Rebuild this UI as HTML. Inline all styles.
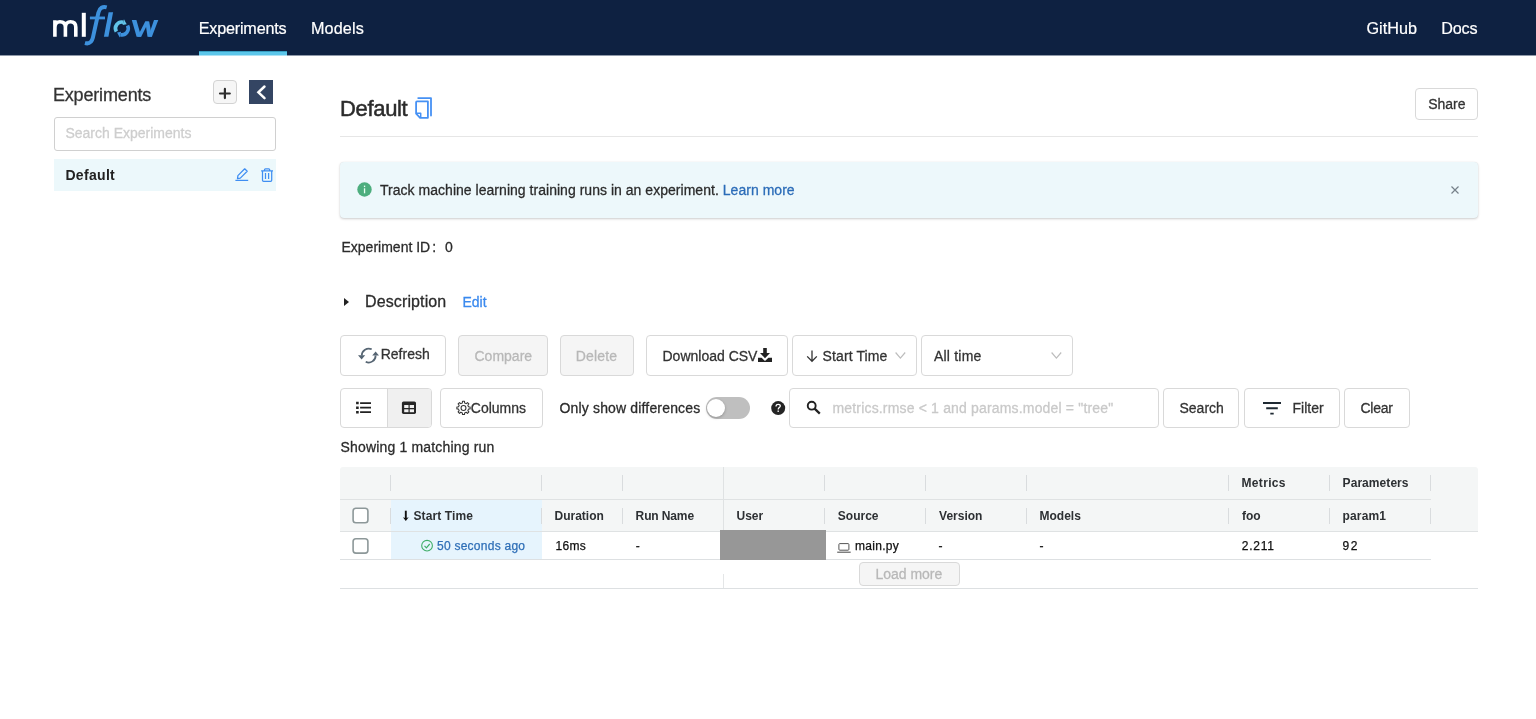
<!DOCTYPE html>
<html>
<head>
<meta charset="utf-8">
<title>MLflow</title>
<style>
*{box-sizing:border-box;margin:0;padding:0}
html,body{width:1536px;height:719px;overflow:hidden;background:#fff}
body{will-change:transform;font-family:"Liberation Sans",sans-serif;color:#333;font-size:14px;position:relative}
.abs{position:absolute;white-space:nowrap}
.t{position:absolute;white-space:nowrap;line-height:1;-webkit-text-stroke:.28px}
#hdr{position:absolute;left:0;top:0;width:1536px;height:55px;background:#0e2141}
#hdr .t{color:#fff;font-size:16.2px;-webkit-text-stroke:.2px}
.btn{position:absolute;border:1px solid #d9d9d9;border-radius:4px;background:#fff;color:#333;font-size:14px;white-space:nowrap}
.btn.dis{background:#f5f5f5;color:#b8b8b8}
.btn .t{font-size:14px}
.tick{position:absolute;width:1px;height:16px;background:#d9dcde}
.hc{position:absolute;white-space:nowrap;line-height:1;font-size:12px;font-weight:bold;color:#2d3033;letter-spacing:0px}
.dc{position:absolute;white-space:nowrap;line-height:1;font-size:12px;color:#111;letter-spacing:.3px;-webkit-text-stroke:.25px}
.cb{position:absolute;width:16px;height:16px;border:1.7px solid #8f9a9c;border-radius:3.5px;background:#fff}
</style>
</head>
<body>

<!-- ================= HEADER ================= -->
<div id="hdr">
  <svg class="abs" style="left:40px;top:0" width="130" height="55" viewBox="40 0 130 55">
    <defs><clipPath id="cw"><rect x="128" y="20" width="34" height="16.8"/></clipPath></defs>
    <!-- m -->
    <path d="M54.9 36.8V20.2 M54.9 27.4C54.9 23.4 57.4 21.8 59.9 21.8C63 21.8 65.4 23.4 65.4 27.2V36.8 M65.4 27.4C65.4 23.4 67.9 21.8 70.4 21.8C73.4 21.8 75.8 23.4 75.8 27.2V36.8" fill="none" stroke="#fff" stroke-width="3.6"/>
    <!-- l -->
    <rect x="81.8" y="12.8" width="4" height="24" fill="#fff"/>
    <!-- f -->
    <path d="M84.9 43.1C89.2 44.1 91.8 42.2 92.9 37.6L98.4 12.6C99.5 7.8 102.8 6.2 106.7 7.3" fill="none" stroke="#3d91dd" stroke-width="4"/>
    <path d="M89.9 17.95H105" fill="none" stroke="#3d91dd" stroke-width="2.8"/>
    <!-- l italic -->
    <path d="M108.6 12.2H113.1L108.4 36.8H103.9Z" fill="#3d91dd"/>
    <!-- o -->
    <path d="M127.55 25.49A6.4 6.4 0 0 1 120.41 34.64" fill="none" stroke="#3d91dd" stroke-width="3.6"/>
    <path d="M121.09 31.71L119.74 37.56L117.02 32.60Z" fill="#3d91dd"/>
    <path d="M116.31 31.60A6.4 6.4 0 0 1 123.29 22.16" fill="none" stroke="#62c5ea" stroke-width="3.6"/>
    <path d="M122.61 25.09L123.96 19.24L126.68 24.20Z" fill="#62c5ea"/>
    <!-- w -->
    <path d="M131.8 20H136.4L141.2 36.8H136.6Z" fill="#3d91dd"/><path d="M137.4 36.8H141.2L148.8 21.4H145.2Z" fill="#3d91dd"/><path d="M145.3 21.4H149.2L151.9 36.8H147.5Z" fill="#3d91dd"/><path d="M148.3 36.8H151.9L158.3 20H154Z" fill="#3d91dd"/>
  </svg>
  <div class="t" id="h_exp" style="left:198.7px;top:19.7px;letter-spacing:-0.2px">Experiments</div>
  <div class="abs" style="left:199px;top:51px;width:88px;height:1px;background:#379fc3"></div><div class="abs" style="left:199px;top:52px;width:88px;height:3px;background:#5cc6ea"></div>
  <div class="t" id="h_mod" style="left:311.0px;top:19.7px;letter-spacing:.12px">Models</div>
  <div class="t" id="h_git" style="left:1366.5px;top:19.7px;letter-spacing:0px">GitHub</div>
  <div class="t" id="h_doc" style="left:1441.3px;top:19.7px;letter-spacing:-0.2px">Docs</div>
</div>

<div class="abs" style="left:0;top:55px;width:1536px;height:1px;background:#8f99a9"></div><div class="abs" style="left:199px;top:55px;width:88px;height:1px;background:#aee2f4"></div>
<!-- ================= SIDEBAR ================= -->
<div class="t" id="s_title" style="left:52.9px;top:85.6px;font-size:18px;color:#333;letter-spacing:-0.16px">Experiments</div>
<div class="abs" style="left:213px;top:80px;width:24px;height:24px;border:1px solid #d3d3d3;border-radius:4px;background:#f6f6f6"></div>
<svg class="abs" style="left:217px;top:86px" width="16" height="16" viewBox="217 86 16 16"><path d="M224.9 88.9V98.1M220 93.5H229.8" stroke="#2e2e2e" stroke-width="2.2" stroke-linecap="round"/></svg>
<div class="abs" style="left:249px;top:80px;width:24px;height:24px;background:#344563"></div>
<svg class="abs" style="left:253px;top:84px" width="16" height="18" viewBox="253 84 16 18"><path d="M264.5 86.5L258.4 92.3L264.5 98.2" fill="none" stroke="#fff" stroke-width="2.5" stroke-linecap="round"/></svg>
<div class="abs" style="left:54px;top:117px;width:222px;height:34px;border:1px solid #d0d0d0;border-radius:3px;background:#fff"></div>
<div class="t" id="s_search" style="left:65.4px;top:126px;font-size:14px;color:#cecece">Search Experiments</div>
<div class="abs" style="left:54px;top:159px;width:222px;height:32px;background:#ecf8fb"></div>
<div class="t" id="s_def" style="-webkit-text-stroke:0;left:65.4px;top:168px;font-size:14px;font-weight:bold;color:#222;letter-spacing:0.32px">Default</div>
<!-- edit icon -->
<svg class="abs" style="left:233px;top:165px" width="18" height="18" viewBox="233 165 18 18"><path d="M244.7 168.8L247.2 171.3L240.3 178.1L237.5 178.6L237.9 175.6Z" fill="none" stroke="#3f8ef2" stroke-width="1.25" stroke-linejoin="round"/><path d="M235.4 180.4H248.2" stroke="#3f8ef2" stroke-width="1.25"/></svg>
<!-- trash icon -->
<svg class="abs" style="left:259px;top:166px" width="16" height="18" viewBox="259 166 16 18"><path d="M261.1 170.8H273 M264.5 170.6V169.8Q264.5 168.9 265.5 168.9H268.7Q269.7 168.9 269.7 169.8V170.6 M262.5 171V180.2Q262.5 181.3 263.6 181.3H270.6Q271.7 181.3 271.7 180.2V170.6 M265.5 173.1V179M268.6 173.1V179" fill="none" stroke="#3f8ef2" stroke-width="1.25"/></svg>

<!-- ================= MAIN ================= -->
<div class="t" id="m_title" style="left:340px;top:98.2px;font-size:22px;color:#2b2b2b;-webkit-text-stroke:.5px #2b2b2b;letter-spacing:-0.33px">Default</div>
<!-- copy icon -->
<svg class="abs" style="left:412px;top:94px" width="24" height="28" viewBox="412 94 24 28"><path d="M418.2 98.1H431V115.6" fill="none" stroke="#4691f4" stroke-width="1.8" stroke-linecap="round" stroke-linejoin="round"/><path d="M416.1 102.3Q416.1 101.4 417 101.4H427.9V117.8H420.1L416.1 113.7Z" fill="none" stroke="#4691f4" stroke-width="1.8" stroke-linejoin="round"/><path d="M416.4 113.3H420.7V117.6" fill="none" stroke="#4691f4" stroke-width="1.5" stroke-linejoin="round"/></svg>
<div class="btn" style="left:1415px;top:88px;width:63px;height:32px"><div class="t" id="b_share" style="left:12.2px;top:8px">Share</div></div>
<div class="abs" style="left:340px;top:136px;width:1138px;height:1px;background:#e6e6e6"></div>

<!-- alert -->
<div class="abs" style="left:340px;top:161.5px;width:1138px;height:56px;background:#edf8fb;border-radius:4px;box-shadow:0 1px 2.5px rgba(0,0,0,.2), 0 0 1px rgba(0,0,0,.1)"></div>
<svg class="abs" style="left:357px;top:182px" width="15" height="15" viewBox="0 0 15 15"><circle cx="7.5" cy="7.5" r="7.2" fill="#4dae7e"/><rect x="6.9" y="6.3" width="1.3" height="5" fill="#e9fff3"/><rect x="6.9" y="3.6" width="1.3" height="1.5" fill="#e9fff3"/></svg>
<div class="t" id="a_txt" style="left:380px;top:182.5px;font-size:14px;color:#2b2b2b;letter-spacing:0.03px">Track machine learning training runs in an experiment. <span style="color:#2b6cb8">Learn more</span></div>
<svg class="abs" style="left:1450px;top:185px" width="10" height="10" viewBox="0 0 10 10"><path d="M1.5 1.5L8.5 8.5M8.5 1.5L1.5 8.5" stroke="#76818a" stroke-width="1.2"/></svg>

<div class="t" id="e_id" style="left:341.5px;top:239.7px;font-size:14px;color:#2b2b2b">Experiment ID<span style="margin-left:2px">:</span><span style="margin-left:9px">0</span></div>

<svg class="abs" style="left:342px;top:296px" width="9" height="12" viewBox="342 296 9 12"><path d="M344 298L349 302L344 306Z" fill="#222"/></svg>
<div class="t" id="d_txt" style="left:365px;top:294px;font-size:16px;color:#2b2b2b;letter-spacing:0.12px">Description</div>
<div class="t" id="d_edit" style="left:462.5px;top:295px;font-size:14px;color:#3a89ee">Edit</div>

<!-- row 1 buttons -->
<div class="btn" style="left:340px;top:335px;width:106px;height:40.5px"></div>
<svg class="abs" style="left:356px;top:345px" width="26" height="22" viewBox="356 345 26 22"><path d="M371.7 349.3A6.9 6.9 0 0 0 361.8 355.6" fill="none" stroke="#566573" stroke-width="1.75"/><path d="M365.7 361.8A6.9 6.9 0 0 0 375.6 355.4" fill="none" stroke="#566573" stroke-width="1.75"/><path d="M358 355.2H365.2L361.6 359.4Z M372.2 355.6H379L375.6 351.5Z" fill="#566573"/></svg>
<div class="t" id="b_ref" style="left:380.7px;top:347.2px;font-size:14px">Refresh</div>
<div class="btn dis" style="left:458px;top:335px;width:90px;height:40.5px"><div class="t" id="b_cmp" style="left:15.5px;top:12.5px">Compare</div></div>
<div class="btn dis" style="left:560px;top:335px;width:73.5px;height:40.5px"><div class="t" id="b_del" style="left:14.7px;top:12.5px;letter-spacing:0.2px">Delete</div></div>
<div class="btn" style="left:646px;top:335px;width:142px;height:40.5px"><div class="t" id="b_csv" style="left:15.5px;top:12.5px">Download CSV</div>
  <svg class="abs" style="left:109.9px;top:10.7px" width="16" height="16" viewBox="0 0 16 16"><path d="M6.2 1H9.8V6H13L8 11.2L3 6H6.2Z" fill="#222"/><path d="M1 10.8H4.6L8 14L11.4 10.8H15V15H1Z" fill="#222"/></svg>
</div>
<div class="btn" style="left:792px;top:335px;width:125px;height:40.5px">
  <svg class="abs" style="left:11.5px;top:12.5px" width="14" height="15" viewBox="0 0 14 15"><path d="M7 1.6V12M2.2 7.4L7 12.3L11.8 7.4" fill="none" stroke="#333" stroke-width="1.3"/></svg>
  <div class="t" id="b_st" style="left:29.6px;top:12.5px;letter-spacing:.1px">Start Time</div>
  <svg class="abs" style="left:101px;top:14.5px" width="13" height="11" viewBox="0 0 13 11"><path d="M1.6 1.5L6.4 7.1L11.2 1.5" fill="none" stroke="#bdbdbd" stroke-width="1.2"/></svg>
</div>
<div class="btn" style="left:921px;top:335px;width:152px;height:40.5px">
  <div class="t" id="b_at" style="left:12px;top:12.5px;letter-spacing:0.2px">All time</div>
  <svg class="abs" style="left:127.5px;top:14.5px" width="13" height="11" viewBox="0 0 13 11"><path d="M1.6 1.5L6.4 7.1L11.2 1.5" fill="none" stroke="#bdbdbd" stroke-width="1.2"/></svg>
</div>

<!-- row 2 -->
<div class="btn" style="left:340px;top:388px;width:92px;height:40px;overflow:hidden">
  <div class="abs" style="left:45.5px;top:0;width:46px;height:40px;background:#f0f0f0;border-left:1px solid #d9d9d9"></div>
</div>
<svg class="abs" style="left:355px;top:400px" width="18" height="16" viewBox="355 400 18 16"><path d="M356.1 403.1H358.7M356.1 407.65H358.7M356.1 412.2H358.7" stroke="#222" stroke-width="2.5"/><path d="M360.1 403.1H371M360.1 407.65H371M360.1 412.2H371" stroke="#222" stroke-width="1.7"/></svg>
<svg class="abs" style="left:400px;top:400px" width="18" height="16" viewBox="400 400 18 16"><rect x="401.9" y="401.4" width="14.1" height="12.5" rx="1.6" fill="#262626"/><rect x="404.2" y="405" width="4.3" height="3" fill="#f0f0f0"/><rect x="409.7" y="405" width="4.3" height="3" fill="#f0f0f0"/><rect x="404.2" y="409.3" width="4.3" height="2.9" fill="#f0f0f0"/><rect x="409.7" y="409.3" width="4.3" height="2.9" fill="#f0f0f0"/></svg>
<div class="btn" style="left:440px;top:388px;width:103px;height:40px"></div>
<svg class="abs" style="left:455px;top:399px" width="18" height="18" viewBox="455 399 18 18"><path d="M462.35 402.98L462.51 401.32L464.49 401.32L464.65 402.98L466.20 403.62L467.49 402.56L468.89 403.96L467.83 405.25L468.47 406.80L470.13 406.96L470.13 408.94L468.47 409.10L467.83 410.65L468.89 411.94L467.49 413.34L466.20 412.28L464.65 412.92L464.49 414.58L462.51 414.58L462.35 412.92L460.80 412.28L459.51 413.34L458.11 411.94L459.17 410.65L458.53 409.10L456.87 408.94L456.87 406.96L458.53 406.80L459.17 405.25L458.11 403.96L459.51 402.56L460.80 403.62Z" fill="none" stroke="#333" stroke-width="1.05" stroke-linejoin="round"/><circle cx="463.5" cy="407.95" r="2.45" fill="none" stroke="#333" stroke-width="1.05"/></svg>
<div class="t" id="b_col" style="left:470.8px;top:401px;font-size:14px">Columns</div>
<div class="t" id="osd" style="left:559.5px;top:401px;font-size:14px;color:#2b2b2b;letter-spacing:0.16px">Only show differences</div>
<div class="abs" style="left:705.5px;top:397px;width:44.5px;height:22px;border-radius:11px;background:#bfbfbf"></div>
<div class="abs" style="left:707.3px;top:399px;width:18px;height:18px;border-radius:9px;background:#fff;box-shadow:0 1px 3px rgba(0,0,0,.25)"></div>
<svg class="abs" style="left:770px;top:400px" width="16" height="16" viewBox="0 0 16 16"><circle cx="8.2" cy="8.1" r="7" fill="#242424"/><path d="M6 6.4C6 5 7 4.3 8.2 4.3C9.5 4.3 10.3 5.1 10.3 6.1C10.3 7.6 8.2 7.6 8.2 9.4" fill="none" stroke="#fff" stroke-width="1.25"/><rect x="7.5" y="10.5" width="1.4" height="1.4" fill="#fff"/></svg>
<div class="btn" style="left:789px;top:388px;width:370px;height:40px">
  <svg class="abs" style="left:15px;top:10px" width="18" height="18" viewBox="805 399 18 18"><circle cx="811.7" cy="405.7" r="3.95" fill="none" stroke="#222" stroke-width="1.9"/><path d="M814.6 408.6L819.8 413.6" stroke="#222" stroke-width="2.3"/></svg>
  <div class="t" id="q_ph" style="left:42.5px;top:12px;color:#c9c9c9;font-size:14px;letter-spacing:0.17px">metrics.rmse &lt; 1 and params.model = "tree"</div>
</div>
<div class="btn" style="left:1163px;top:388px;width:76px;height:40px"><div class="t" id="b_sea" style="left:15.5px;top:12px">Search</div></div>
<div class="btn" style="left:1244px;top:388px;width:96px;height:40px">
  <svg class="abs" style="left:17px;top:12px" width="20" height="15" viewBox="0 0 20 15"><path d="M1 2H19M4.2 7.3H15.8M8.3 12.6H11.7" stroke="#1f2a33" stroke-width="1.9"/></svg>
  <div class="t" id="b_fil" style="left:47.5px;top:12px">Filter</div>
</div>
<div class="btn" style="left:1344px;top:388px;width:66px;height:40px"><div class="t" id="b_clr" style="left:15.5px;top:12px;letter-spacing:-0.27px">Clear</div></div>

<div class="t" id="showing" style="left:340.5px;top:440px;font-size:14px;color:#2b2b2b;letter-spacing:0.17px">Showing 1 matching run</div>

<!-- ================= TABLE ================= -->
<div class="abs" style="left:340px;top:466.5px;width:1138px;height:64.5px;background:#f4f6f6;border-radius:3px 3px 0 0"></div>
<div class="abs" style="left:391px;top:499.5px;width:151px;height:60px;background:#e6f4fd"></div>
<div class="abs" style="left:340px;top:499px;width:1091px;height:1px;background:#dfe2e3"></div>
<div class="abs" style="left:340px;top:530.5px;width:1138px;height:1px;background:#dfe2e3"></div>
<div class="abs" style="left:340px;top:559.3px;width:1091px;height:1px;background:#dde0e2"></div>
<div class="abs" style="left:340px;top:588px;width:1138px;height:1px;background:#dde0e2"></div>
<div class="abs" style="left:723px;top:466.5px;width:1px;height:64px;background:#dfe2e3"></div>
<div class="abs" style="left:723px;top:574px;width:1px;height:14px;background:#e4e6e7"></div>

<!-- ticks group row -->
<div class="tick" style="left:390px;top:475px"></div>
<div class="tick" style="left:541px;top:475px"></div>
<div class="tick" style="left:622px;top:475px"></div>
<div class="tick" style="left:824px;top:475px"></div>
<div class="tick" style="left:925px;top:475px"></div>
<div class="tick" style="left:1026px;top:475px"></div>
<div class="tick" style="left:1228px;top:475px"></div>
<div class="tick" style="left:1329px;top:475px"></div>
<div class="tick" style="left:1430px;top:475px"></div>
<!-- ticks header row -->
<div class="tick" style="left:390px;top:507.5px"></div>
<div class="tick" style="left:541px;top:507.5px"></div>
<div class="tick" style="left:622px;top:507.5px"></div>
<div class="tick" style="left:824px;top:507.5px"></div>
<div class="tick" style="left:925px;top:507.5px"></div>
<div class="tick" style="left:1026px;top:507.5px"></div>
<div class="tick" style="left:1228px;top:507.5px"></div>
<div class="tick" style="left:1329px;top:507.5px"></div>
<div class="tick" style="left:1430px;top:507.5px"></div>

<div class="hc" id="g_met" style="left:1241.5px;top:477.3px;letter-spacing:0.33px">Metrics</div>
<div class="hc" id="g_par" style="left:1342.6px;top:477.3px;letter-spacing:0.06px">Parameters</div>

<svg class="abs" style="left:351px;top:506px" width="19" height="19" viewBox="351 506 19 19"><rect x="353.1" y="508.3" width="14.8" height="14.5" rx="2.8" fill="#fff" stroke="#8d9899" stroke-width="1.6"/></svg>
<svg class="abs" style="left:401px;top:509px" width="10" height="14" viewBox="401 509 10 14"><path d="M405.8 510.7V519" stroke="#111" stroke-width="1.9"/><path d="M402.9 517.3L405.8 521.1L408.7 517.3Q405.8 518.6 402.9 517.3Z" fill="#111"/></svg>
<div class="hc" id="c_st" style="left:413.5px;top:510px;letter-spacing:0.1px">Start Time</div>
<div class="hc" id="c_du" style="left:554.5px;top:510px">Duration</div>
<div class="hc" id="c_rn" style="left:635.6px;top:510px;letter-spacing:-0.12px">Run Name</div>
<div class="hc" id="c_us" style="left:736.5px;top:510px">User</div>
<div class="hc" id="c_so" style="left:837.8px;top:510px">Source</div>
<div class="hc" id="c_ve" style="left:939.1px;top:510px">Version</div>
<div class="hc" id="c_mo" style="left:1039.5px;top:510px">Models</div>
<div class="hc" id="c_fo" style="left:1242.0px;top:510px">foo</div>
<div class="hc" id="c_pa" style="left:1342.6px;top:510px;letter-spacing:0.12px">param1</div>

<svg class="abs" style="left:351px;top:536px" width="19" height="19" viewBox="351 536 19 19"><rect x="353.1" y="538.8" width="14.8" height="14.3" rx="2.8" fill="#fff" stroke="#8d9899" stroke-width="1.6"/></svg>
<svg class="abs" style="left:420px;top:539px" width="14" height="14" viewBox="420 539 14 14"><circle cx="427.05" cy="545.7" r="5.35" fill="none" stroke="#3fae68" stroke-width="1.1"/><path d="M424.5 545.9L426.4 547.8L429.7 544" fill="none" stroke="#3fae68" stroke-width="1.15"/></svg>
<div class="dc" id="r_ago" style="left:437px;top:540.1px;color:#2f6fb7;letter-spacing:0.25px">50 seconds ago</div>
<div class="dc" id="r_du" style="left:555.5px;top:540.1px">16ms</div>
<div class="dc" id="r_rn" style="left:635.8px;top:540.1px">-</div>
<div class="abs" style="left:720px;top:529.7px;width:106.3px;height:30px;background:#979797"></div>
<svg class="abs" style="left:836px;top:541px" width="16" height="13" viewBox="836 541 16 13"><rect x="838.9" y="543.6" width="10" height="6.6" rx="0.9" fill="none" stroke="#555" stroke-width="1"/><path d="M837.2 552.2H850.7" stroke="#555" stroke-width="1.1"/></svg>
<div class="dc" id="r_src" style="left:855px;top:540.1px">main.py</div>
<div class="dc" id="r_ve" style="left:938.5px;top:540.1px">-</div>
<div class="dc" id="r_mo" style="left:1039.5px;top:540.1px">-</div>
<div class="dc" id="r_fo" style="left:1241.8px;top:540.1px;letter-spacing:0.75px">2.211</div>
<div class="dc" id="r_pa" style="left:1342.6px;top:540.1px;letter-spacing:1.5px">92</div>

<div class="abs" style="left:859px;top:561.5px;width:101px;height:24.5px;border:1px solid #d9d9d9;border-radius:4px;background:#f5f5f5"></div>
<div class="t" id="lm" style="left:875.4px;top:567px;font-size:14px;color:#b8b8b8">Load more</div>

</body>
</html>
